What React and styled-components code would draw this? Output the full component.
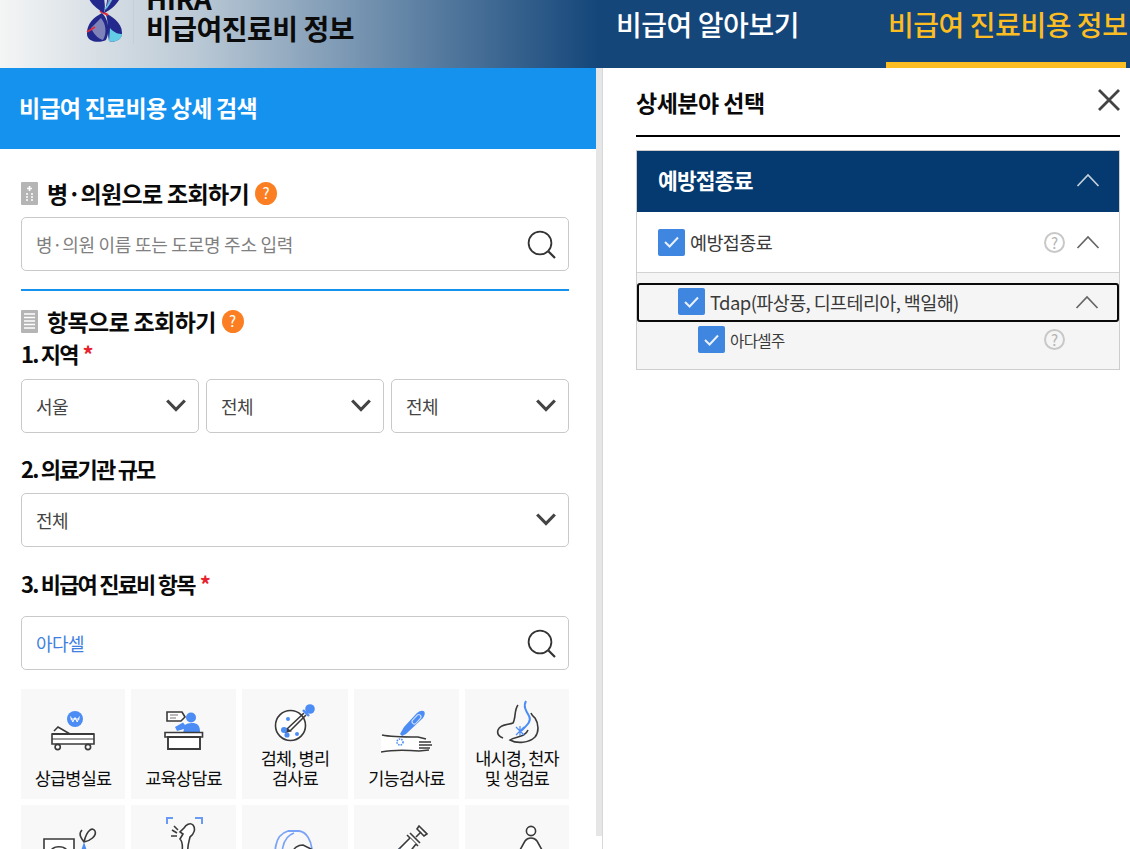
import React from 'react';
import styled, { createGlobalStyle } from 'styled-components';

const Global = createGlobalStyle`
  html, body {
    margin: 0;
    padding: 0;
    height: 100%;
    overflow: hidden;
    background: #fff;
  }
  * {
    box-sizing: border-box;
  }
  body {
    font-family: "Noto Sans CJK KR", "Noto Sans", sans-serif;
    color: #111;
  }
`;

const Page = styled.div`
  width: 1130px;
  height: 849px;
  overflow: hidden;
`;

const Header = styled.header`
  display: flex;
  height: 68px;
  overflow: hidden;
  background: linear-gradient(90deg, #f4f5f5 0%, #bccad6 17%, #6c8cab 34%, #14467a 53%, #14467a 100%);
`;

const Brand = styled.div`
  display: flex;
  align-items: flex-end;
  width: 616px;
  height: 68px;
  padding-left: 86px;
`;

const Logo = styled.svg`
  flex: none;
  width: 37px;
  height: 52px;
  margin-bottom: 26px;
`;

const BrandText = styled.div`
  flex: none;
  margin: 0 0 24px 10px;
  padding: 0 0 1px 12px;
  border-left: 1px solid #c3cfda;
  font-size: 28px;
  line-height: 30px;
  font-weight: 700;
  letter-spacing: -0.5px;
  color: #0b0b0b;
  white-space: nowrap;
`;

const Nav = styled.nav`
  display: grid;
  grid-template-columns: 270px 240px;
  height: 68px;
`;

const NavItem = styled.a`
  display: block;
  height: 68px;
  padding: 3px 0 0 ${(p) => (p.$active ? '2px' : '0')};
  font-size: 28px;
  line-height: 42px;
  font-weight: 500;
  letter-spacing: -0.45px;
  white-space: nowrap;
  color: ${(p) => (p.$active ? '#fcbd22' : '#fff')};
  border-bottom: ${(p) => (p.$active ? '6px solid #fcbd22' : '0')};
`;

const Main = styled.div`
  display: flex;
  height: 781px;
`;

const LeftPanel = styled.section`
  width: 596px;
  flex: none;
`;

const ScrollTrack = styled.div`
  flex: none;
  width: 6px;
  height: 768px;
  background: #e6e6e6;
`;

const LeftTitle = styled.h1`
  margin: 0;
  height: 81px;
  padding-left: 19px;
  background: #1591ee;
  color: #fff;
  font-size: 23px;
  line-height: 79px;
  font-weight: 700;
  letter-spacing: -0.75px;
`;

const LeftBody = styled.div`
  padding: 29px 27px 0 21px;
`;

const SectionTitle = styled.h2`
  display: flex;
  align-items: center;
  margin: 0;
  height: 30px;
  font-size: 23px;
  font-weight: 700;
  letter-spacing: -0.65px;
  color: #0a0a0a;
  white-space: nowrap;
`;

const TitleIcon = styled.svg`
  width: 17px;
  height: 23px;
  margin-right: 9px;
  flex: none;
`;

const HelpBadge = styled.span`
  width: 22px;
  height: 23px;
  margin-left: 6px;
  border-radius: 50%;
  background: #fb7f22;
  color: #fff;
  font-size: 15px;
  line-height: 22px;
  text-align: center;
  font-weight: 400;
  letter-spacing: 0;
`;

const Field = styled.div`
  display: flex;
  align-items: center;
  justify-content: space-between;
  height: 54px;
  margin-top: ${(p) => p.$top || 0}px;
  padding: 0 12px 0 14px;
  border: 1px solid #c9c9c9;
  border-radius: 5px;
  background: #fff;
  font-size: 18px;
  letter-spacing: ${(p) => p.$spacing || -0.55}px;
  color: ${(p) => p.$color || '#444'};
  white-space: nowrap;
`;

const Divider = styled.div`
  height: 2px;
  margin: 18px 0 15px;
  background: #1591ee;
`;

const Label = styled.div`
  margin-top: ${(p) => p.$top || 0}px;
  height: 30px;
  font-size: 22px;
  line-height: 30px;
  font-weight: 700;
  letter-spacing: -1.8px;
  color: #0a0a0a;
  white-space: nowrap;
`;

const Required = styled.span`
  margin-left: 5px;
  color: #e8222c;
`;

const SelectRow = styled.div`
  display: grid;
  grid-template-columns: repeat(3, 1fr);
  gap: 7px;
  margin-top: 11px;
`;

const TileGrid = styled.div`
  display: grid;
  grid-template-columns: 104px 105px 106px 105px 104px;
  grid-auto-rows: 110px;
  gap: 6px;
  margin-top: 19px;
`;

const Tile = styled.div`
  display: flex;
  flex-direction: column;
  align-items: center;
  background: #f8f8f8;
  padding-top: ${(p) => p.$top}px;
`;

const TileIcon = styled.svg`
  flex: none;
  fill: none;
  stroke: #3a3a3a;
  stroke-width: 1.6;
`;

const TileLabel = styled.div`
  flex: 1;
  display: flex;
  align-items: flex-end;
  padding-bottom: 11px;
  font-size: 17.5px;
  line-height: 20px;
  letter-spacing: -0.8px;
  text-align: center;
  color: #0d0d0d;
  white-space: pre-line;
`;

const RightPanel = styled.section`
  flex: 1;
  padding: 0 10px 0 33px;
  border-left: 1px solid #d8d8d8;
`;

const RightHead = styled.div`
  display: flex;
  align-items: center;
  justify-content: space-between;
  height: 69px;
  border-bottom: 2px solid #000;
`;

const RightTitle = styled.h2`
  margin: 0;
  font-size: 23px;
  font-weight: 700;
  letter-spacing: -0.5px;
  color: #0a0a0a;
`;

const CloseBtn = styled.svg`
  width: 24px;
  height: 24px;
  margin-right: -1px;
  margin-bottom: 3px;
`;

const Accordion = styled.div`
  margin-top: 13px;
  border: 1px solid #cdcdcd;
`;

const AccHead = styled.div`
  display: flex;
  align-items: center;
  justify-content: space-between;
  height: 61px;
  padding: 0 19px 4px 21px;
  background: #043a6f;
  color: #fff;
  font-size: 21.5px;
  font-weight: 700;
  letter-spacing: -0.85px;
`;

const TreeRow = styled.div`
  display: flex;
  align-items: center;
  height: ${(p) => p.$h}px;
  padding-left: ${(p) => p.$indent}px;
  padding-right: 19px;
  background: ${(p) => p.$bg || '#fff'};
`;

const Focused = styled(TreeRow)`
  border: 2px solid #0a0a0a;
  border-radius: 3px;
  padding-right: 18px;
  padding-bottom: 2px;
`;

const Group = styled.div`
  background: #f5f5f5;
  border-top: 1px solid #d3d3d3;
  padding: 10px 0 12px;
`;

const CheckBox = styled.span`
  display: flex;
  align-items: center;
  justify-content: center;
  flex: none;
  width: 27px;
  height: 27px;
  border-radius: 2px;
  background: #3e86e0;
`;

const RowText = styled.span`
  flex: 1;
  margin-left: 5px;
  font-size: ${(p) => p.$size || 18.5}px;
  letter-spacing: ${(p) => p.$spacing || -0.6}px;
  color: #3a3a3a;
  white-space: nowrap;
`;

const Chevron = styled.svg`
  width: 24px;
  height: 14px;
  flex: none;
`;

const HelpOutline = styled.span`
  flex: none;
  width: 21px;
  height: 21px;
  margin-right: ${(p) => p.$right}px;
  border: 2px solid #c8c8c8;
  border-radius: 50%;
  color: #b4b4b4;
  font-size: 15px;
  line-height: 17px;
  text-align: center;
`;

const SearchIcon = () => (
  <svg width="30" height="29" viewBox="0 0 30 29" fill="none" stroke="#333" strokeWidth="1.8" style={{ marginRight: -1 }}>
    <circle cx="13" cy="13" r="11.4" />
    <path d="M21.5 21.5 L28 28" strokeWidth="2.2" />
  </svg>
);

const SelectArrow = () => (
  <svg width="22" height="15" viewBox="0 0 22 15" fill="none" stroke="#444" strokeWidth="3.2" style={{ marginTop: -2, marginRight: -1 }}>
    <path d="M2.2 2.5 L11 11.5 L19.8 2.5" />
  </svg>
);

const UpArrow = ({ color = '#666' }) => (
  <Chevron viewBox="0 0 24 14" fill="none" stroke={color} strokeWidth="1.7">
    <path d="M1.5 13 L12 2 L22.5 13" />
  </Chevron>
);

const Check = () => (
  <svg width="17" height="14" viewBox="0 0 17 14" fill="none" stroke="#e9f1fc" strokeWidth="2">
    <path d="M2 7 L6.6 11.5 L15 2.5" />
  </svg>
);

const BedIcon = () => (
  <TileIcon width="44" height="40" viewBox="0 0 44 40">
    <circle cx="24" cy="8" r="8" fill="#4c8cf5" stroke="none" />
    <path d="M19.5 5.5 L21.8 11 L24 6.5 L26.2 11 L28.5 5.5 M19.5 8 H28.5" stroke="#fff" strokeWidth="1" />
    <path d="M3 20 L7 16 L19 23" fill="#fff" />
    <path d="M1 23 H43 V33 H1 Z" fill="#fff" />
    <path d="M1 28 H43" strokeWidth="1.2" />
    <path d="M1 23 H43" strokeWidth="2" />
    <circle cx="6.7" cy="36" r="2.6" fill="#fff" />
    <circle cx="37" cy="36" r="2.6" fill="#fff" />
  </TileIcon>
);

const DeskIcon = () => (
  <TileIcon width="40" height="40" viewBox="0 0 40 40">
    <path d="M3 1 H18 L21 6 L17 10 H3 Z" fill="#fff" />
    <path d="M6 4 H14 M6 7 H12" stroke="#777" strokeWidth="1.1" />
    <circle cx="27" cy="6.5" r="5" fill="#4c8cf5" stroke="none" />
    <path d="M11 16 L19 11.5 L21 14 C23 12 31 11 34 14 C36 16 36 19 36 22 H19 L20 18 L13 20 Z" fill="#4c8cf5" stroke="none" />
    <path d="M1 21.5 H38.5 V26 H1 Z" fill="#fff" />
    <path d="M4 26 H36 V38 H4 Z" fill="#fff" strokeWidth="1.9" />
  </TileIcon>
);

const DropperIcon = () => (
  <TileIcon width="44" height="40" viewBox="0 0 44 40">
    <circle cx="17.5" cy="21.5" r="15" fill="#fff" />
    <path d="M14 25 L31 9 M17 27 L33 11" />
    <path d="M13 28 L14 25 L17 27 Z" fill="#3a3a3a" />
    <path d="M30 6 L36 12" stroke="#4c8cf5" strokeWidth="2.4" />
    <circle cx="37" cy="5" r="4.8" fill="#4c8cf5" stroke="none" />
    <circle cx="11" cy="26" r="3" fill="#4c8cf5" stroke="none" />
    <circle cx="14" cy="31" r="2.6" fill="#4c8cf5" stroke="none" />
    <circle cx="24" cy="30" r="2" fill="#4c8cf5" stroke="none" />
    <circle cx="15" cy="15" r="2" fill="#4c8cf5" stroke="none" />
  </TileIcon>
);

const ArmIcon = () => (
  <TileIcon width="52" height="44" viewBox="0 0 52 44" strokeWidth="1.3">
    <path d="M19 25 L21 27 L25 25 L42 9 C45 5 44 1 40 2 C38 2 36 4 35 5 L23 18 Z" fill="#4c8cf5" stroke="none" />
    <rect x="30" y="8.5" width="11" height="4.5" rx="2.2" transform="rotate(-48 35 10.5)" stroke="#cfe0fd" strokeWidth="1.1" />
    <path d="M1 26 C10 28 26 28 37 28 L45 30 C50 32 51 37 49 40 L38 42 C26 41 10 42 0 43 V27 Z" fill="#fff" stroke="none" />
    <path d="M1 26 C10 28 26 28 37 28 L45 30 M0 43 C10 41 26 41 38 42 L48 41" />
    <path d="M38 33 H50 M38 36 H51 M38 39 H49" strokeWidth="1.6" />
    <circle cx="19" cy="33" r="3" stroke="#4c8cf5" strokeDasharray="1.5 1" />
  </TileIcon>
);

const StomachIcon = () => (
  <TileIcon width="44" height="44" viewBox="0 0 44 44">
    <path d="M23 5 C19 10 21 18 18 23 C13 25 5 24 3 30 C2 33 3 36 8 38" />
    <path d="M36 13 C37 16 38 16 40 18 C44 24 44 32 40 37 C34 43 22 44 15 40 C20 36 30 38 33 30" />
    <path d="M31 1 C28 6 31 11 34 16 C37 21 32 25 26 31" stroke="#4c8cf5" strokeWidth="2" />
    <path d="M21 27 L29 35 M29 27 L21 35 M25 26 V36" stroke="#4c8cf5" strokeWidth="1.2" />
  </TileIcon>
);

const UltrasoundIcon = () => (
  <TileIcon width="60" height="44" viewBox="0 0 60 44">
    <path d="M1 11 H31 V44 H1 Z" fill="#fff" />
    <path d="M7 24 C10 17 22 17 25 24 L22 38 H10 Z" />
    <path d="M39 2 C35 6 38 10 41 14 C47 13 54 8 52 3 C50 -1 44 1 41 14" />
    <path d="M41 14 L35 32 H47 Z" fill="#4c8cf5" stroke="none" />
    <path d="M46 26 H58" />
  </TileIcon>
);

const BoneIcon = () => (
  <TileIcon width="40" height="44" viewBox="0 0 40 44">
    <path d="M3 7 V1 H9 M31 1 H38 V7" stroke="#6a9af5" strokeWidth="2" />
    <path d="M29 8 C26 5 22 8 20 11 L16 15 L19 17 L16 22 C18 24 19 28 18 36 L24 36 C23 29 25 25 26 20 C30 17 32 12 29 8 Z" fill="#fff" />
    <path d="M8 13 L13 16 M7 19 L13 19 M10 9 L14 13" />
  </TileIcon>
);

const ScanIcon = () => (
  <TileIcon width="44" height="44" viewBox="0 0 44 44">
    <path d="M7 38 C-1 26 1 6 15 2 H26 C34 3 38 12 39 20" stroke="#7aa3f7" strokeWidth="1.8" />
    <path d="M13 38 C6 26 9 8 21 4" stroke="#7aa3f7" />
    <path d="M20 24 C20 19 25 16 30 16 L38 20 V44 H20 Z" fill="#fff" />
  </TileIcon>
);

const SyringeIcon = () => (
  <TileIcon width="44" height="44" viewBox="0 0 44 44">
    <path d="M34 1 L42 9 L39 11 L32 4 Z" fill="#f8f8f8" />
    <path d="M36 7 L31 12 M22 10 L33 21 M25 8 L35 18" />
    <path d="M25 13 L5 33 L2 44 L14 41 L31 19" fill="#fff" />
    <path d="M15 23 L0 44 L20 33 Z" fill="#4c8cf5" stroke="none" />
  </TileIcon>
);

const PersonIcon = () => (
  <TileIcon width="60" height="44" viewBox="0 0 60 44">
    <circle cx="44" cy="10" r="4.6" fill="#fff" />
    <path d="M38 20 C41 16 47 16 50 20 L55 29 C53 37 35 37 33 29 Z" fill="#fff" />
    <path d="M37 33 C41 31 47 31 51 33 V44 H37 Z" fill="#6a9af5" stroke="none" />
  </TileIcon>
);

const tiles = [
  { icon: <BedIcon />, label: '상급병실료', top: 22 },
  { icon: <DeskIcon />, label: '교육상담료', top: 22 },
  { icon: <DropperIcon />, label: '검체, 병리\n검사료', top: 15 },
  { icon: <ArmIcon />, label: '기능검사료', top: 20 },
  { icon: <StomachIcon />, label: '내시경, 천자\n및 생검료', top: 11 },
  { icon: <UltrasoundIcon />, label: '', top: 23 },
  { icon: <BoneIcon />, label: '', top: 12 },
  { icon: <ScanIcon />, label: '', top: 24 },
  { icon: <SyringeIcon />, label: '', top: 20 },
  { icon: <PersonIcon />, label: '', top: 16 },
];

export default function App() {
  return (
    <Page>
      <Global />
      <Header>
        <Brand>
          <Logo viewBox="0 0 37 52">
            <path d="M16 23 C11 26 1 31 1 44 C1 53 15 53 20 50 C24 42 23 30 16 23 Z" fill="#22288c" />
            <path d="M19 23 C25 26 36 32 36 43 C36 50 28 53 23 51 C21 40 23 30 19 23 Z" fill="#22288c" />
            <path d="M24 38 C28 43 33 44 36 44 C36 50 28 53 23 51 Z" fill="#64cde6" />
            <path d="M5 38 C8 44 11 48 17 50 C21 43 20 34 15 28 Z" fill="#7f82b8" />
            <path d="M1 42 L9 37" stroke="#e32a3a" strokeWidth="2" />
            <path d="M14 21 L22 25" stroke="#e32a3a" strokeWidth="2" />
            <path d="M18 23 C11 19 1 12 1 0 H16 C18 8 20 16 18 23 Z" fill="#22288c" />
            <path d="M18 23 C27 19 36 10 36 0 H23 C21 8 21 16 18 23 Z" fill="#22288c" />
            <path d="M20 20 C24 14 29 8 29 0 H23 C23 8 21 14 20 20 Z" fill="#7f82b8" />
            <path d="M19 19 C24 14 27 8 26 0" stroke="#64cde6" strokeWidth="1.2" fill="none" />
          </Logo>
          <BrandText>
            <div>HIRA</div>
            <div>비급여진료비 정보</div>
          </BrandText>
        </Brand>
        <Nav>
          <NavItem>비급여 알아보기</NavItem>
          <NavItem $active>비급여 진료비용 정보</NavItem>
        </Nav>
      </Header>
      <Main>
        <LeftPanel>
          <LeftTitle>비급여 진료비용 상세 검색</LeftTitle>
          <LeftBody>
            <SectionTitle>
              <TitleIcon viewBox="0 0 17 23">
                <rect width="17" height="23" rx="1" fill="#b5b5b5" />
                <path d="M8.5 4 V9 M6 6.5 H11 M5 12 H7 M10 12 H12 M5 15 H7 M10 15 H12 M5 18 H7 M10 18 H12" stroke="#fff" strokeWidth="1.6" />
              </TitleIcon>
              병·의원으로 조회하기
              <HelpBadge>?</HelpBadge>
            </SectionTitle>
            <Field $top={9} $color="#808080" $spacing={-0.25}>
              병·의원 이름 또는 도로명 주소 입력
              <SearchIcon />
            </Field>
            <Divider />
            <SectionTitle>
              <TitleIcon viewBox="0 0 17 23">
                <rect width="17" height="23" rx="1" fill="#b5b5b5" />
                <path d="M3 4 H14 M3 7.5 H14 M3 11 H14 M3 14.5 H14 M3 18 H14" stroke="#fff" strokeWidth="1.4" />
              </TitleIcon>
              항목으로 조회하기
              <HelpBadge>?</HelpBadge>
            </SectionTitle>
            <Label $top={2}>1. 지역<Required>*</Required></Label>
            <SelectRow>
              <Field>서울<SelectArrow /></Field>
              <Field>전체<SelectArrow /></Field>
              <Field>전체<SelectArrow /></Field>
            </SelectRow>
            <Label $top={20}>2. 의료기관 규모</Label>
            <Field $top={10}>전체<SelectArrow /></Field>
            <Label $top={21}>3. 비급여 진료비 항목<Required>*</Required></Label>
            <Field $top={18} $color="#3f7fe0">
              아다셀
              <SearchIcon />
            </Field>
            <TileGrid>
              {tiles.map((t, i) => (
                <Tile key={i} $top={t.top}>
                  {t.icon}
                  <TileLabel>{t.label}</TileLabel>
                </Tile>
              ))}
            </TileGrid>
          </LeftBody>
        </LeftPanel>
        <ScrollTrack />
        <RightPanel>
          <RightHead>
            <RightTitle>상세분야 선택</RightTitle>
            <CloseBtn viewBox="0 0 24 24" fill="none" stroke="#444" strokeWidth="2.8">
              <path d="M2 2 L22 22 M22 2 L2 22" />
            </CloseBtn>
          </RightHead>
          <Accordion>
            <AccHead>
              예방접종료
              <UpArrow color="#c5d0dc" />
            </AccHead>
            <TreeRow $h={60} $indent={21}>
              <CheckBox><Check /></CheckBox>
              <RowText>예방접종료</RowText>
              <HelpOutline $right={11}>?</HelpOutline>
              <UpArrow />
            </TreeRow>
            <Group>
              <Focused $h={39} $indent={39} $bg="#f5f5f5">
                <CheckBox><Check /></CheckBox>
                <RowText>Tdap(파상풍, 디프테리아, 백일해)</RowText>
                <UpArrow />
              </Focused>
              <TreeRow $h={35} $indent={61} $bg="#f5f5f5">
                <CheckBox><Check /></CheckBox>
                <RowText $size={15.5}>아다셀주</RowText>
                <HelpOutline $right={35}>?</HelpOutline>
              </TreeRow>
            </Group>
          </Accordion>
        </RightPanel>
      </Main>
    </Page>
  );
}
